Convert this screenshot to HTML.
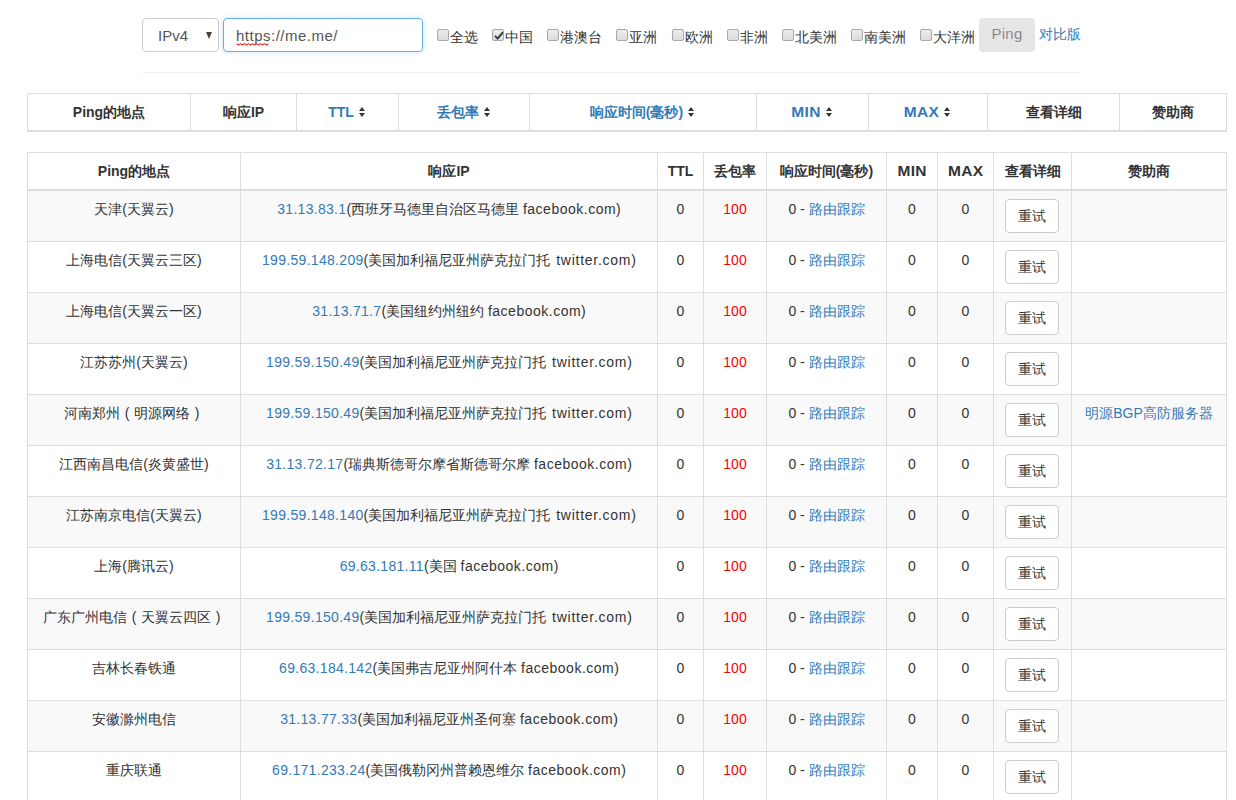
<!DOCTYPE html><html><head><meta charset="utf-8"><style>html,body{margin:0;padding:0;background:#fff;}
body{font-family:"Liberation Sans",sans-serif;font-size:14px;line-height:20px;color:#333;width:1236px;height:800px;overflow:hidden;position:relative;}
a{color:#337ab7;text-decoration:none;}
.form{position:absolute;left:0;top:0;width:1236px;height:60px;}
.sel{position:absolute;left:142px;top:18px;width:75px;height:32px;border:1px solid #ccc;border-radius:4px;box-sizing:content-box;color:#555;line-height:34px;padding-left:0;font-size:15px;}
.sel{text-indent:15px;}
.arr{position:absolute;left:63px;top:13px;width:0;height:0;border-left:3.5px solid transparent;border-right:3.5px solid transparent;border-top:7px solid #444;}
.inp{position:absolute;left:223px;top:18px;width:198px;height:32px;letter-spacing:0.5px;border:1px solid #66afe9;border-radius:4px;box-shadow:0 0 5px rgba(102,175,233,.35);color:#555;line-height:34px;text-indent:12px;font-size:15px;}
.spell{text-decoration:underline wavy red;text-decoration-thickness:1px;text-underline-offset:2px;}
.cb{position:absolute;top:24px;height:20px;white-space:nowrap;}
.box{position:absolute;left:0;top:5px;width:10px;height:10px;border:1px solid #a9a9a9;border-radius:2px;background:linear-gradient(#ececec,#dcdcdc);}
.box.on::after{content:"";position:absolute;left:3px;top:0px;width:3px;height:6px;border:solid #333;border-width:0 2px 2px 0;transform:rotate(40deg);}
.lt{position:absolute;left:13px;top:3px;}
.pingbtn{position:absolute;left:979px;top:18px;width:56px;height:34px;background:#e6e6e6;border-radius:4px;color:#8a8a8a;text-align:center;line-height:32px;font-size:15px;letter-spacing:0.3px;}
.cmp{position:absolute;left:1039px;top:24px;}
.hr{position:absolute;left:143px;top:72px;width:937px;height:1px;background:#eee;}
.t{position:absolute;left:27px;width:1200px;border-collapse:separate;border-spacing:0;table-layout:fixed;border-left:1px solid #ddd;border-top:1px solid #ddd;}
.t1{top:93px;}
.t2{top:152px;}
.t th,.t td{box-sizing:border-box;border-right:1px solid #ddd;border-bottom:1px solid #ddd;padding:8px;text-align:center;vertical-align:top;line-height:20px;white-space:nowrap;overflow:hidden;}
.t th{font-weight:bold;border-bottom-width:2px;height:38px;}
.t td{height:51px;}
.t tr.odd td{background:#f9f9f9;}
.red{color:red;}
.sort{display:inline-block;width:8px;height:10px;margin-left:5px;position:relative;top:0px;}
.sort::before{content:"";position:absolute;left:0;top:0;border-left:3.5px solid transparent;border-right:3.5px solid transparent;border-bottom:4px solid #333;}
.sort::after{content:"";position:absolute;left:0;top:6px;border-left:3.5px solid transparent;border-right:3.5px solid transparent;border-top:4px solid #333;}
.btn{display:inline-block;width:52px;height:32px;border:1px solid #ccc;border-radius:4px;background:#fff;line-height:32px;text-align:center;color:#333;box-sizing:content-box;}
.d{letter-spacing:0.3px;}
.l{letter-spacing:0.5px;}
.mm{letter-spacing:1.4px;}
.mm2{letter-spacing:1.4px;margin-right:-1.4px;}
.tw{letter-spacing:0.75px;}
.sp{word-spacing:2px;}
.fw{display:inline-block;width:14px;text-align:center;}
.btn{margin-left:-1px;}
.box.on::after{display:none;}
.wave{position:absolute;left:236px;top:42px;}
.mm{letter-spacing:0.3px;font-size:15.5px;}
.mm2{letter-spacing:0.3px;margin-right:-0.3px;font-size:15.5px;}
</style></head><body>
<div class="form">
<div class="sel">IPv4<span class="arr"></span></div>
<div class="inp">https://me.me/</div><svg class="wave" width="35" height="5"><path d="M0.5 1.6 L2.5 3.0 L4.5 1.6 L6.5 3.0 L8.5 1.6 L10.5 3.0 L12.5 1.6 L14.5 3.0 L16.5 1.6 L18.5 3.0 L20.5 1.6 L22.5 3.0 L24.5 1.6 L26.5 3.0 L28.5 1.6 L30.5 3.0 L32.5 1.6" fill="none" stroke="#f22" stroke-width="1.1" stroke-linejoin="round"/></svg>
<label class="cb" style="left:437px"><span class="box"></span><span class="lt">全选</span></label>
<label class="cb" style="left:492px"><span class="box"><svg width="12" height="12" style="position:absolute;left:0;top:0"><path d="M2.5 6.4 L4.6 8.7 L9.4 2.9" fill="none" stroke="#3a3a3a" stroke-width="2" stroke-linecap="round" stroke-linejoin="round"/></svg></span><span class="lt">中国</span></label>
<label class="cb" style="left:547px"><span class="box"></span><span class="lt">港澳台</span></label>
<label class="cb" style="left:616px"><span class="box"></span><span class="lt">亚洲</span></label>
<label class="cb" style="left:672px"><span class="box"></span><span class="lt">欧洲</span></label>
<label class="cb" style="left:727px"><span class="box"></span><span class="lt">非洲</span></label>
<label class="cb" style="left:782px"><span class="box"></span><span class="lt">北美洲</span></label>
<label class="cb" style="left:851px"><span class="box"></span><span class="lt">南美洲</span></label>
<label class="cb" style="left:920px"><span class="box"></span><span class="lt">大洋洲</span></label>
<div class="pingbtn">Ping</div>
<a class="cmp">对比版</a>
</div><div class="hr"></div>
<table class="t t1"><thead><tr>
<th style="width:163px">Ping的地点</th>
<th style="width:106px">响应IP</th>
<th style="width:102px"><a>TTL</a><span class="sort"></span></th>
<th style="width:131px"><a>丢包率</a><span class="sort"></span></th>
<th style="width:227px"><a>响应时间(毫秒)</a><span class="sort"></span></th>
<th style="width:112px"><a class="mm">MIN</a><span class="sort"></span></th>
<th style="width:119px"><a class="mm">MAX</a><span class="sort"></span></th>
<th style="width:132px">查看详细</th>
<th style="width:107px">赞助商</th>
</tr></thead></table>
<table class="t t2"><thead><tr>
<th style="width:213px">Ping的地点</th>
<th style="width:417px">响应IP</th>
<th style="width:46px">TTL</th>
<th style="width:63px">丢包率</th>
<th style="width:120px">响应时间(毫秒)</th>
<th style="width:51px"><span class="mm2">MIN</span></th>
<th style="width:56px"><span class="mm2">MAX</span></th>
<th style="width:78px">查看详细</th>
<th style="width:155px">赞助商</th>
</tr></thead><tbody>
<tr class="odd"><td>天津(天翼云)</td><td><a><span class="d">31.13.83.1</span></a>(西班牙马德里自治区马德里 <span class="l">facebook.com</span>)</td><td>0</td><td class="red">100</td><td>0 - <a>路由跟踪</a></td><td>0</td><td>0</td><td><span class="btn">重试</span></td><td><a></a></td></tr>
<tr class="even"><td>上海电信(天翼云三区)</td><td><a><span class="d">199.59.148.209</span></a>(美国加利福尼亚州萨克拉门托<span class="sp"> </span><span class="tw">twitter.com</span>)</td><td>0</td><td class="red">100</td><td>0 - <a>路由跟踪</a></td><td>0</td><td>0</td><td><span class="btn">重试</span></td><td><a></a></td></tr>
<tr class="odd"><td>上海电信(天翼云一区)</td><td><a><span class="d">31.13.71.7</span></a>(美国纽约州纽约 <span class="l">facebook.com</span>)</td><td>0</td><td class="red">100</td><td>0 - <a>路由跟踪</a></td><td>0</td><td>0</td><td><span class="btn">重试</span></td><td><a></a></td></tr>
<tr class="even"><td>江苏苏州(天翼云)</td><td><a><span class="d">199.59.150.49</span></a>(美国加利福尼亚州萨克拉门托<span class="sp"> </span><span class="tw">twitter.com</span>)</td><td>0</td><td class="red">100</td><td>0 - <a>路由跟踪</a></td><td>0</td><td>0</td><td><span class="btn">重试</span></td><td><a></a></td></tr>
<tr class="odd"><td>河南郑州<span class="fw">(</span>明源网络<span class="fw">)</span></td><td><a><span class="d">199.59.150.49</span></a>(美国加利福尼亚州萨克拉门托<span class="sp"> </span><span class="tw">twitter.com</span>)</td><td>0</td><td class="red">100</td><td>0 - <a>路由跟踪</a></td><td>0</td><td>0</td><td><span class="btn">重试</span></td><td><a>明源<span class="u">BGP</span>高防服务器</a></td></tr>
<tr class="even"><td>江西南昌电信(炎黄盛世)</td><td><a><span class="d">31.13.72.17</span></a>(瑞典斯德哥尔摩省斯德哥尔摩 <span class="l">facebook.com</span>)</td><td>0</td><td class="red">100</td><td>0 - <a>路由跟踪</a></td><td>0</td><td>0</td><td><span class="btn">重试</span></td><td><a></a></td></tr>
<tr class="odd"><td>江苏南京电信(天翼云)</td><td><a><span class="d">199.59.148.140</span></a>(美国加利福尼亚州萨克拉门托<span class="sp"> </span><span class="tw">twitter.com</span>)</td><td>0</td><td class="red">100</td><td>0 - <a>路由跟踪</a></td><td>0</td><td>0</td><td><span class="btn">重试</span></td><td><a></a></td></tr>
<tr class="even"><td>上海(腾讯云)</td><td><a><span class="d">69.63.181.11</span></a>(美国 <span class="l">facebook.com</span>)</td><td>0</td><td class="red">100</td><td>0 - <a>路由跟踪</a></td><td>0</td><td>0</td><td><span class="btn">重试</span></td><td><a></a></td></tr>
<tr class="odd"><td>广东广州电信<span class="fw">(</span>天翼云四区<span class="fw">)</span></td><td><a><span class="d">199.59.150.49</span></a>(美国加利福尼亚州萨克拉门托<span class="sp"> </span><span class="tw">twitter.com</span>)</td><td>0</td><td class="red">100</td><td>0 - <a>路由跟踪</a></td><td>0</td><td>0</td><td><span class="btn">重试</span></td><td><a></a></td></tr>
<tr class="even"><td>吉林长春铁通</td><td><a><span class="d">69.63.184.142</span></a>(美国弗吉尼亚州阿什本 <span class="l">facebook.com</span>)</td><td>0</td><td class="red">100</td><td>0 - <a>路由跟踪</a></td><td>0</td><td>0</td><td><span class="btn">重试</span></td><td><a></a></td></tr>
<tr class="odd"><td>安徽滁州电信</td><td><a><span class="d">31.13.77.33</span></a>(美国加利福尼亚州圣何塞 <span class="l">facebook.com</span>)</td><td>0</td><td class="red">100</td><td>0 - <a>路由跟踪</a></td><td>0</td><td>0</td><td><span class="btn">重试</span></td><td><a></a></td></tr>
<tr class="even"><td>重庆联通</td><td><a><span class="d">69.171.233.24</span></a>(美国俄勒冈州普赖恩维尔 <span class="l">facebook.com</span>)</td><td>0</td><td class="red">100</td><td>0 - <a>路由跟踪</a></td><td>0</td><td>0</td><td><span class="btn">重试</span></td><td><a></a></td></tr>
</tbody></table></body></html>
